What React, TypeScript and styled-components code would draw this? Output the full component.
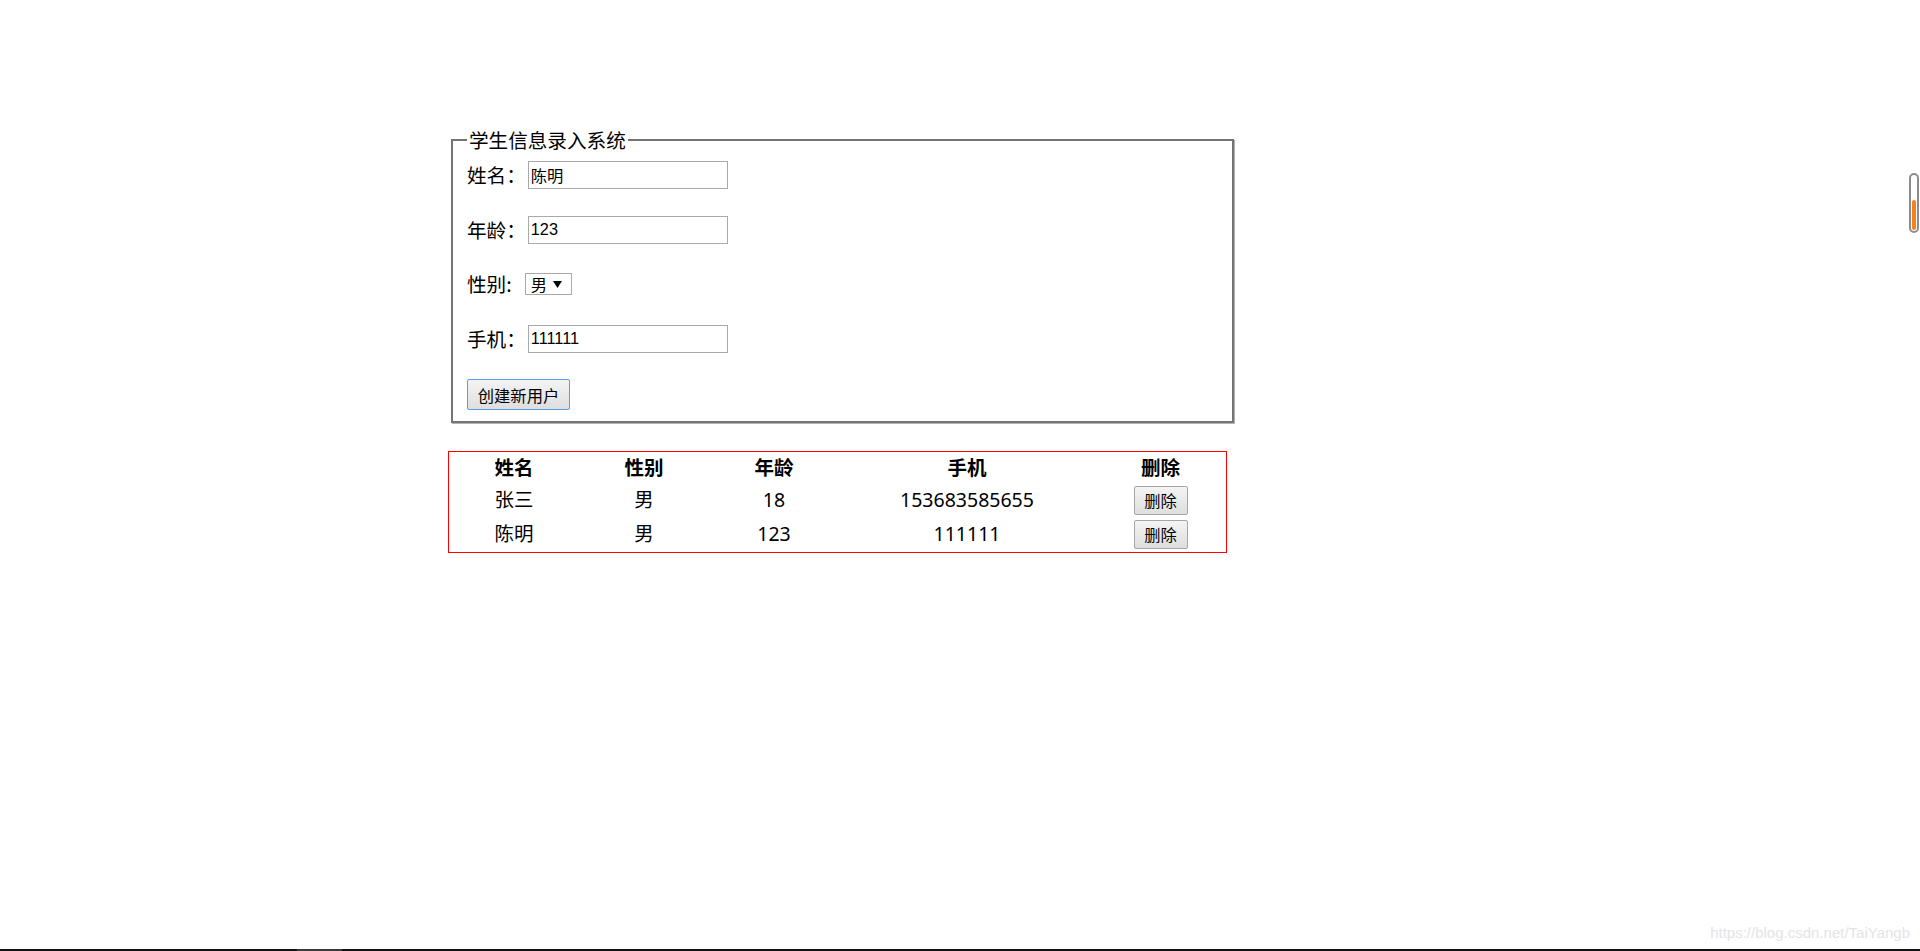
import styled, { createGlobalStyle } from 'styled-components';

const students = [
  { name: '张三', gender: '男', age: '18', phone: '153683585655' },
  { name: '陈明', gender: '男', age: '123', phone: '111111' },
];

const columns = [
  { title: '姓名', width: 126 },
  { title: '性别', width: 130 },
  { title: '年龄', width: 126 },
  { title: '手机', width: 256 },
  { title: '删除', width: 127 },
];

export default function App() {
  return (
    <>
      <GlobalStyle />
      <Page>
        <Content>
          <FormBox>
            <Legend>学生信息录入系统</Legend>
            <Rows>
              <Row>
                <Label>姓名：</Label>
                <TextInput defaultValue="陈明" />
              </Row>
              <Row>
                <Label>年龄：</Label>
                <TextInput defaultValue="123" />
              </Row>
              <Row>
                <Label>性别:</Label>
                <SelectBox>
                  <span>男</span>
                  <svg width="9" height="8" viewBox="0 0 9 8">
                    <path d="M0 1 L9 1 L4.5 8 Z" fill="#000" />
                  </svg>
                </SelectBox>
              </Row>
              <Row>
                <Label>手机：</Label>
                <TextInput defaultValue="111111" />
              </Row>
              <ButtonRow>
                <CreateButton>创建新用户</CreateButton>
              </ButtonRow>
            </Rows>
          </FormBox>

          <Table>
            <thead>
              <tr>
                {columns.map((c) => (
                  <HeadCell key={c.title} style={{ width: c.width }}>
                    {c.title}
                  </HeadCell>
                ))}
              </tr>
            </thead>
            <tbody>
              {students.map((s) => (
                <tr key={s.name}>
                  <Cell>{s.name}</Cell>
                  <Cell>{s.gender}</Cell>
                  <Cell>{s.age}</Cell>
                  <Cell>{s.phone}</Cell>
                  <Cell>
                    <DeleteButton>删除</DeleteButton>
                  </Cell>
                </tr>
              ))}
            </tbody>
          </Table>
        </Content>

        <Spacer />
        <Watermark>https://blog.csdn.net/TaiYangb</Watermark>
        <BottomLine>
          <BottomMark />
        </BottomLine>
        <ScrollPill>
          <ScrollFill />
        </ScrollPill>
      </Page>
    </>
  );
}

const GlobalStyle = createGlobalStyle`
  html, body {
    margin: 0;
    padding: 0;
    background: #fff;
  }
  body {
    font-family: "Noto Sans CJK SC", "Liberation Sans", sans-serif;
    color: #000;
  }
`;

const Page = styled.div`
  position: relative;
  height: 951px;
  display: flex;
  flex-direction: column;
  overflow: hidden;
`;

const Content = styled.div`
  padding: 128px 0 0 448px;
`;

const FormBox = styled.fieldset`
  box-sizing: border-box;
  width: 783px;
  margin: 0 0 0 3px;
  padding: 9px 14px 11px 14px;
  border: 2px solid #747474;
  box-shadow: 1px 1px 0 #b2b2b2;
  min-inline-size: 0;
`;

const Legend = styled.legend`
  padding: 0 2px;
  font-size: 19.6px;
  line-height: 24px;
  font-family: "Noto Sans CJK SC", sans-serif;
`;

const Rows = styled.div`
  display: flex;
  flex-direction: column;
  gap: 26.5px;
`;

const Row = styled.div`
  display: flex;
  align-items: center;
  height: 28px;
`;

const ButtonRow = styled.div`
  display: flex;
  height: 31px;
`;

const Label = styled.span`
  font-size: 19.6px;
  line-height: 24px;
  font-family: "Noto Sans CJK SC", sans-serif;
`;

const TextInput = styled.input`
  box-sizing: border-box;
  width: 200px;
  height: 28px;
  margin: 0 0 0 2px;
  padding: 0 2px;
  border: 1px solid #a9a9a9;
  font-size: 16.3px;
  font-family: "Liberation Sans", "Noto Sans CJK SC", sans-serif;
  color: #000;
  outline: none;
`;

const SelectBox = styled.div`
  box-sizing: border-box;
  display: flex;
  align-items: center;
  gap: 6px;
  width: 47px;
  height: 22px;
  margin-left: 13px;
  padding: 0 0 0 5px;
  border: 1px solid #a9a9a9;
  font-size: 16.3px;
  font-family: "Noto Sans CJK SC", sans-serif;
`;

const ButtonBase = styled.button`
  box-sizing: border-box;
  padding: 0;
  border: 1px solid #a6a6a6;
  border-radius: 2px;
  background: linear-gradient(#f4f4f4, #dedede);
  font-size: 16.3px;
  font-family: "Noto Sans CJK SC", sans-serif;
  color: #000;
  cursor: pointer;
`;

const CreateButton = styled(ButtonBase)`
  width: 103px;
  height: 31px;
  border-color: #5b9be8;
`;

const DeleteButton = styled(ButtonBase)`
  width: 54px;
  height: 29px;
  vertical-align: middle;
`;

const Table = styled.table`
  box-sizing: border-box;
  width: 779px;
  margin-top: 28px;
  border: 1px solid #ff0000;
  border-spacing: 2px;
  font-family: "Noto Sans", "Noto Sans CJK SC", sans-serif;
  font-size: 19.5px;
  table-layout: fixed;
`;

const HeadCell = styled.th`
  height: 28px;
  padding: 0;
  font-weight: 700;
  text-align: center;
  line-height: 24px;
`;

const Cell = styled.td`
  height: 32px;
  padding: 0;
  text-align: center;
  line-height: 24px;
`;

const Spacer = styled.div`
  flex: 1;
`;

const Watermark = styled.div`
  align-self: flex-end;
  margin: 0 10px 8px 0;
  font-family: "Liberation Sans", sans-serif;
  font-size: 15px;
  color: #e4e4e4;
`;

const BottomLine = styled.div`
  height: 2px;
  background: #111;
  display: flex;
`;

const BottomMark = styled.div`
  width: 45px;
  margin-left: 297px;
  background: #3a3a3a;
`;

const ScrollPill = styled.div`
  position: absolute;
  top: 173px;
  right: 1px;
  box-sizing: border-box;
  width: 10px;
  height: 60px;
  border: 2px solid #8c8c8c;
  border-radius: 5px;
  display: flex;
  flex-direction: column;
  justify-content: flex-end;
  padding: 1px;
  background: #fff;
`;

const ScrollFill = styled.div`
  height: 30px;
  border-radius: 2px;
  background: #f6821f;
`;
